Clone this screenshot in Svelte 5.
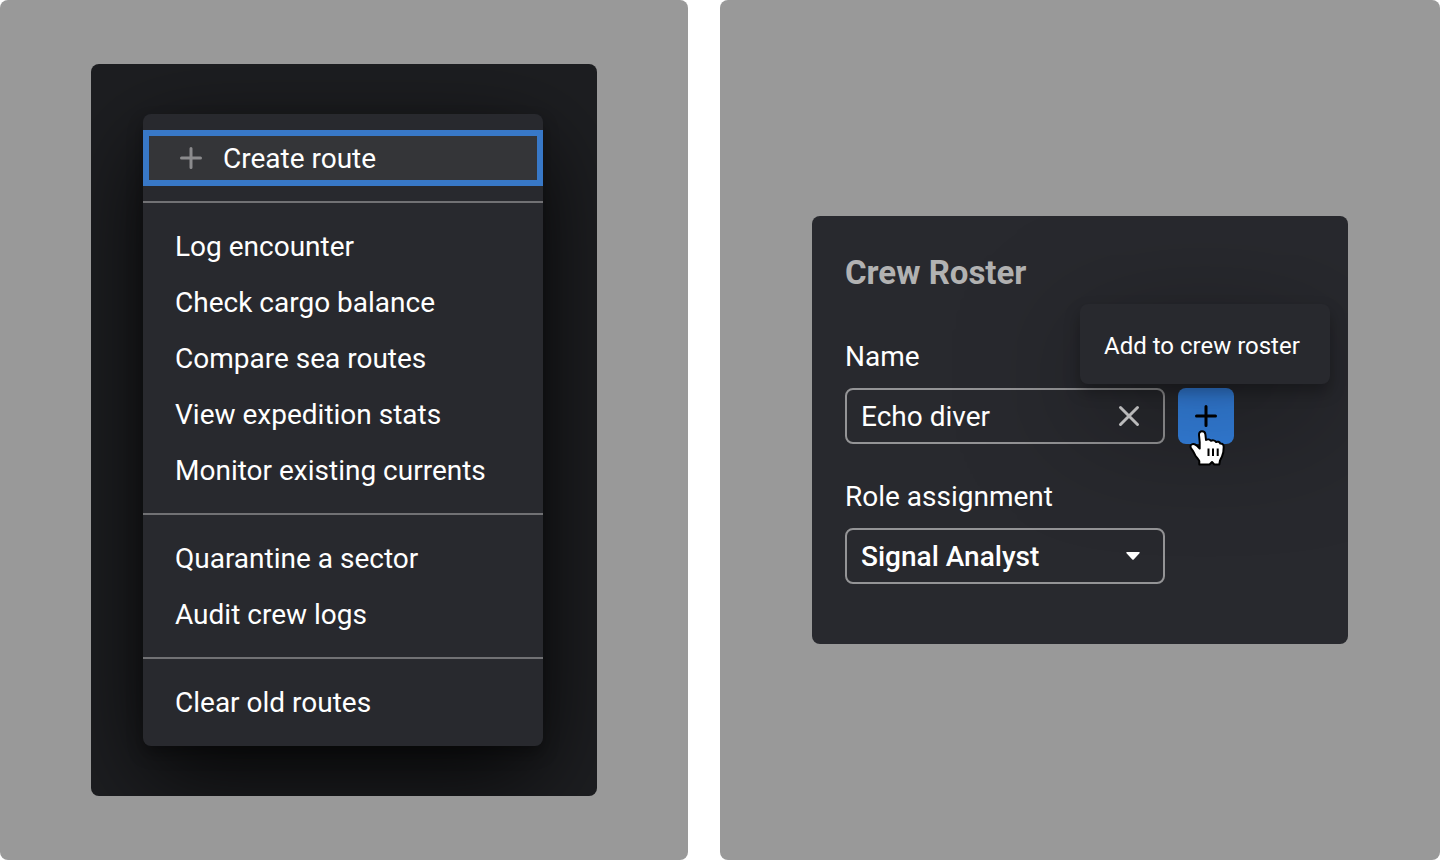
<script lang="ts">
  const groups = [
    ['Log encounter', 'Check cargo balance', 'Compare sea routes', 'View expedition stats', 'Monitor existing currents'],
    ['Quarantine a sector', 'Audit crew logs'],
    ['Clear old routes']
  ];
  const roles = ['Signal Analyst', 'Navigator', 'Engineer'];

  let name = 'Echo diver';
  let role = 'Signal Analyst';
</script>

<main>
  <section class="stage stage-menu">
    <div class="backdrop">
      <div class="menu" role="menu">
        <button class="item create" role="menuitem">
          <svg width="24" height="24" viewBox="0 0 24 24" aria-hidden="true">
            <path d="M12 2.500v19M2.500 12h19" />
          </svg>
          Create route
        </button>
        {#each groups as items}
          <hr />
          {#each items as item}
            <button class="item" role="menuitem">{item}</button>
          {/each}
        {/each}
      </div>
    </div>
  </section>

  <section class="stage stage-form">
    <form class="card" on:submit|preventDefault>
      <h2>Crew Roster</h2>

      <div class="field">
        <label for="name">Name</label>
        <div class="row">
          <div class="control">
            <input id="name" type="text" bind:value={name} />
            <button class="clear" type="button" aria-label="Clear" on:click={() => (name = '')}>
              <svg width="24" height="24" viewBox="0 0 24 24" aria-hidden="true">
                <path d="M3.500 3.500l17 17M20.500 3.500l-17 17" />
              </svg>
            </button>
          </div>
          <div class="add-wrap">
            <button class="add" aria-label="Add to crew roster">
              <svg width="24" height="24" viewBox="0 0 24 24" aria-hidden="true">
                <path d="M12 2.500v19M2.500 12h19" />
              </svg>
            </button>
            <div class="tooltip" role="tooltip">Add to crew roster</div>
            <svg class="pointer" width="38" height="38" viewBox="0 0 38 38" aria-hidden="true">
              <path
                class="hand"
                d="M10.300 34.500V31C9.500 29 7.500 27.500 6.300 25.500C5 23 4.500 21.500 3 19.700C1.800 18.300 1.300 17.200 1.500 16C1.800 14.300 3.500 13.800 5.500 14.300C7.500 14.800 8.800 16.300 10.700 18.500V12L10 5C9.800 2.500 11.300 1.300 13 1.300C14.800 1.300 16.200 2.500 16.400 4.500L17 9.900C18.500 9 20.800 9.300 21.800 10.800C23.500 9.900 26 10.400 27 12C28.500 11.300 30.500 11.700 31.300 13.500C33.300 13.300 34.700 14.700 34.700 17C34.700 20.500 34.500 23.500 33 26.500L31 30.500L30.300 34.500H25.300L23 32L20.500 34.500Z"
              />
              <path class="fingers" d="M19.500 18.500v7.500M24 18.500v7.500M28.700 18.500v7.500" />
            </svg>
          </div>
        </div>
      </div>

      <div class="field">
        <label for="role">Role assignment</label>
        <div class="control select">
          <select id="role" bind:value={role}>
            {#each roles as r}
              <option value={r}>{r}</option>
            {/each}
          </select>
          <svg class="caret" width="14" height="8" viewBox="0 0 14 8" aria-hidden="true">
            <path d="M1 0h12c.8 0 1 .7.500 1.200L7.700 7.500a1 1 0 0 1-1.400 0L.5 1.200C0 .7.200 0 1 0z" />
          </svg>
        </div>
      </div>
    </form>
  </section>
</main>

<style>
  :global(body) {
    background: #fff;
  }

  main {
    display: flex;
    gap: 32px;
    min-height: 100vh;
    font-family: Roboto, 'Liberation Sans', sans-serif;
    font-size: 28px;
    color: #fff;
  }

  .stage {
    display: flex;
    align-items: center;
    justify-content: center;
    border-radius: 8px;
    background: #999;
  }

  .stage-menu {
    flex: 688 1 0;
  }

  .stage-form {
    flex: 720 1 0;
  }

  button,
  input,
  select {
    box-sizing: border-box;
    margin: 0;
    border: 0;
    background: none;
    color: inherit;
    font: inherit;
    outline: none;
  }

  button {
    padding: 0;
    cursor: pointer;
  }

  svg {
    flex: none;
    fill: none;
    stroke: currentColor;
    stroke-width: 3;
    stroke-linecap: round;
  }

  .backdrop {
    overflow: hidden;
    padding: 50px 54px 50px 52px;
    border-radius: 8px;
    background: #1d1e21;
  }

  .menu {
    display: flex;
    flex-direction: column;
    width: 400px;
    padding: 16px 0;
    border-radius: 8px;
    background: #28292e;
    box-shadow:
      0 8px 16px rgba(0, 0, 0, 0.3),
      0 32px 96px rgba(0, 0, 0, 0.8);
  }

  .item {
    display: flex;
    align-items: center;
    height: 56px;
    padding: 0 32px;
    text-align: left;
  }

  .create {
    gap: 20px;
    padding: 0 30px;
    border: 6px solid #3878c7;
    background: #343538;
  }

  .create svg {
    color: #8b8b8d;
  }

  hr {
    width: 100%;
    height: 2px;
    margin: 15px 0;
    border: 0;
    background: #717174;
  }

  .card {
    box-sizing: border-box;
    overflow: hidden;
    width: 536px;
    padding: 36px 33px 60px;
    border-radius: 8px;
    background: #28292e;
  }

  h2 {
    margin: 0 0 46px;
    font-size: 33px;
    font-weight: 700;
    line-height: 42px;
    color: #b2b2b2;
  }

  .field + .field {
    margin-top: 36px;
  }

  label {
    display: block;
    margin-bottom: 14px;
    line-height: 34px;
  }

  .row {
    display: flex;
    gap: 13px;
  }

  .control {
    display: flex;
    align-items: center;
    box-sizing: border-box;
    width: 320px;
    height: 56px;
    border: 2px solid #949496;
    border-radius: 8px;
  }

  input {
    flex: 1;
    min-width: 0;
    height: 100%;
    padding: 0 14px;
  }

  .clear {
    display: flex;
    margin-right: 22px;
    color: #d4d4d5;
  }

  .select {
    display: grid;
  }

  select,
  .caret {
    grid-area: 1 / 1;
  }

  select {
    width: 100%;
    height: 100%;
    padding: 0 14px;
    font-weight: 500;
    appearance: none;
  }

  .caret {
    justify-self: end;
    margin-right: 23px;
    fill: #fff;
    stroke: none;
    pointer-events: none;
  }

  .add-wrap {
    position: relative;
  }

  .add {
    display: flex;
    align-items: center;
    justify-content: center;
    width: 56px;
    height: 56px;
    border-radius: 8px;
    background: #3583e3;
    color: #000;
  }

  .tooltip {
    position: absolute;
    right: -96px;
    bottom: calc(100% + 4px);
    box-sizing: border-box;
    width: 250px;
    padding: 24px 24px 20px;
    border-radius: 8px;
    background: #28292e;
    box-shadow:
      0 8px 16px rgba(0, 0, 0, 0.3),
      0 32px 128px rgba(0, 0, 0, 0.4);
    font-size: 24px;
    line-height: 36px;
    white-space: nowrap;
  }

  .pointer {
    position: absolute;
    top: 42px;
    left: 11px;
    pointer-events: none;
  }

  .hand {
    fill: #fff;
    stroke: #000;
    stroke-width: 2;
    stroke-linejoin: round;
  }

  .fingers {
    stroke: #000;
    stroke-width: 2;
    stroke-linecap: butt;
  }
</style>
